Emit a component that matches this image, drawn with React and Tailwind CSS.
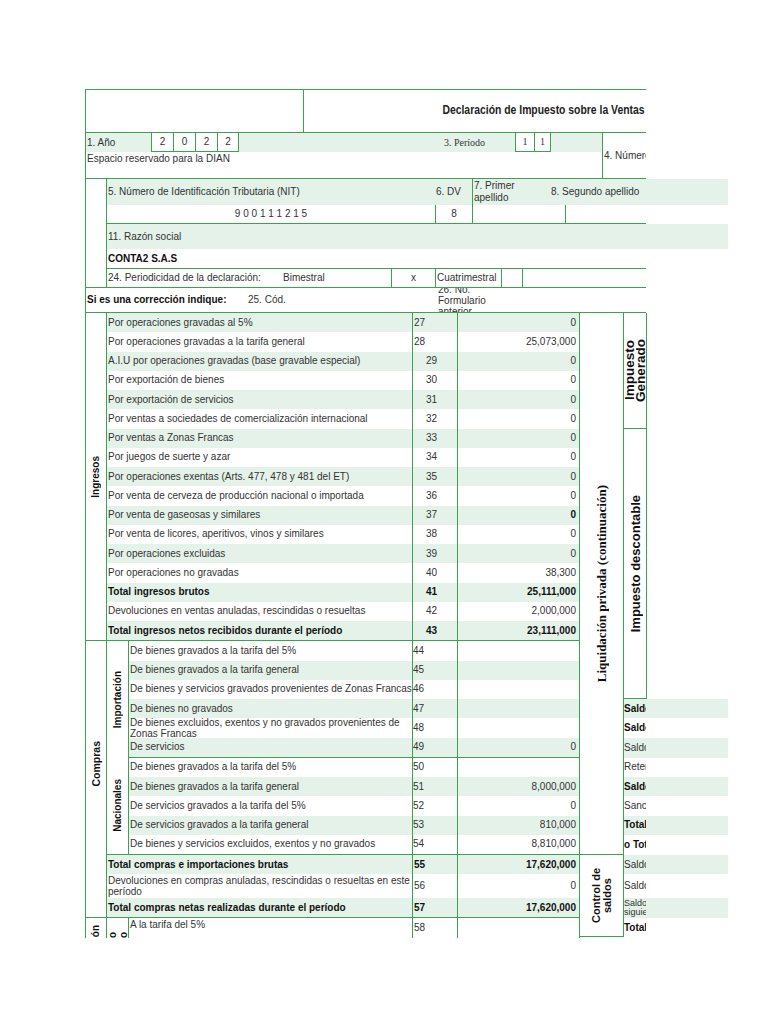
import React from "react";

const L = "border-[#3ca24f]";
const BG = "bg-[#e5f2e9]";
const VT = "[writing-mode:vertical-rl] rotate-180 whitespace-nowrap";

const ingresos = [
  ["Por operaciones gravadas al 5%", "27", "0", { numLeft: true }],
  ["Por operaciones gravadas a la tarifa general", "28", "25,073,000", { numLeft: true }],
  ["A.I.U por operaciones gravadas (base gravable especial)", "29", "0"],
  ["Por exportación de bienes", "30", "0"],
  ["Por exportación de servicios", "31", "0"],
  ["Por ventas a sociedades de comercialización internacional", "32", "0"],
  ["Por ventas a Zonas Francas", "33", "0"],
  ["Por juegos de suerte y azar", "34", "0"],
  ["Por operaciones exentas (Arts. 477, 478 y 481 del ET)", "35", "0"],
  ["Por venta de cerveza de producción nacional o importada", "36", "0"],
  ["Por venta de gaseosas y similares", "37", "0", { valueBold: true }],
  ["Por venta de licores, aperitivos, vinos y similares", "38", "0"],
  ["Por operaciones excluidas", "39", "0"],
  ["Por operaciones no gravadas", "40", "38,300"],
  ["Total ingresos brutos", "41", "25,111,000", { bold: true }],
  ["Devoluciones en ventas anuladas, rescindidas o resueltas", "42", "2,000,000"],
  ["Total ingresos netos recibidos durante el período", "43", "23,111,000", { bold: true }],
];

const importacion = [
  ["De bienes gravados a la tarifa del 5%", "44", ""],
  ["De bienes gravados a la tarifa general", "45", ""],
  ["De bienes y servicios gravados provenientes de Zonas Francas", "46", ""],
  ["De bienes no gravados", "47", ""],
  ["De bienes excluidos, exentos y no gravados provenientes de Zonas Francas", "48", "", { two: true }],
  ["De servicios", "49", "0"],
];

const nacionales = [
  ["De bienes gravados a la tarifa del 5%", "50", ""],
  ["De bienes gravados a la tarifa general", "51", "8,000,000"],
  ["De servicios gravados a la tarifa del 5%", "52", "0"],
  ["De servicios gravados a la tarifa general", "53", "810,000"],
  ["De bienes y servicios excluidos, exentos y no gravados", "54", "8,810,000"],
];

const totales = [
  ["Total compras e importaciones brutas", "55", "17,620,000", { bold: true }],
  ["Devoluciones en compras anuladas, rescindidas o resueltas en este", "56", "0", { two: true, tall: true, second: "período" }],
  ["Total compras netas realizadas durante el período", "57", "17,620,000", { bold: true }],
];

const rightRows = [
  { t: "Saldo a pagar por impuesto", g: true, b: true, h: "h-[19.25px]" },
  { t: "Saldo a favor del período fiscal", g: false, b: true, h: "h-[19.25px]" },
  { t: "Saldo a favor del período fiscal anterior", g: true, b: false, h: "h-[20.25px]" },
  { t: "Retenciones por IVA que le practicaron", g: false, b: false, h: "h-[19.25px]" },
  { t: "Saldo a pagar por impuesto", g: true, b: true, h: "h-[19.25px]" },
  { t: "Sanciones", g: false, b: false, h: "h-[19.25px]" },
  { t: "Total saldo a pagar", g: true, b: true, h: "h-[19.25px]" },
  { t: "o Total saldo a favor", g: false, b: true, h: "h-[20.25px]" },
  { t: "Saldo a favor susceptible de devolución", g: true, b: false, h: "h-[19.25px]" },
  { t: "Saldo a favor sin solicitud de devolución", g: false, b: false, h: "h-[23.75px]" },
  { t: "two", g: true, b: false, h: "h-[20.25px]" },
  { t: "Total retenciones", g: false, b: true, h: "h-[19.25px]" },
];

function DataRow({ r, green, labelW }) {
  const [label, num, value, opt = {}] = r;
  return (
    <div className={`flex ${opt.tall ? "h-[23.75px]" : "h-[19.25px]"} ${green ? BG : ""}`}>
      <div
        className={`${labelW} shrink-0 border-r ${L} pl-[1px] flex items-center overflow-hidden ${
          opt.bold ? "font-bold text-[#111]" : ""
        }`}
      >
        {opt.two ? (
          <span className="leading-[11px]">{label}</span>
        ) : (
          <span className="whitespace-nowrap">{label}</span>
        )}
      </div>
      <div
        className={`w-[45px] shrink-0 border-r ${L} flex items-center ${opt.numLeft ? "pl-[1px]" : ""} ${
          opt.bold ? "font-bold text-[#111]" : ""
        }`}
      >
        {num}
      </div>
      <div
        className={`w-[122px] shrink-0 border-r ${L} flex items-center justify-end pr-[3px] ${
          opt.bold || opt.valueBold ? "font-bold text-[#111]" : ""
        }`}
      >
        {value}
      </div>
    </div>
  );
}

function IngRow({ r, green }) {
  const [label, num, value, opt = {}] = r;
  return (
    <div className={`flex h-[19.25px] ${green ? BG : ""}`}>
      <div
        className={`w-[306px] shrink-0 border-r ${L} pl-[1px] flex items-center overflow-hidden whitespace-nowrap ${
          opt.bold ? "font-bold text-[#111]" : ""
        }`}
      >
        {label}
      </div>
      <div
        className={`w-[45px] shrink-0 border-r ${L} flex items-center ${opt.numLeft ? "pl-[1px]" : "pl-[13px]"} ${
          opt.bold ? "font-bold text-[#111]" : ""
        }`}
      >
        {num}
      </div>
      <div
        className={`w-[122px] shrink-0 border-r ${L} flex items-center justify-end pr-[3px] ${
          opt.bold || opt.valueBold ? "font-bold text-[#111]" : ""
        }`}
      >
        {value}
      </div>
    </div>
  );
}

function TotRow({ r, green }) {
  const [label, num, value, opt = {}] = r;
  return (
    <div className={`flex ${opt.tall ? "h-[23.75px]" : "h-[19.25px]"} ${green ? BG : ""}`}>
      <div
        className={`w-[306px] shrink-0 border-r ${L} pl-[1px] flex items-center ${
          opt.bold ? "font-bold text-[#111]" : ""
        }`}
      >
        {opt.two ? (
          <span className="leading-[11px] whitespace-nowrap">
            {label}
            <br />
            {opt.second}
          </span>
        ) : (
          <span className="whitespace-nowrap">{label}</span>
        )}
      </div>
      <div className={`w-[45px] shrink-0 border-r ${L} flex items-center pl-[1px] ${opt.bold ? "font-bold text-[#111]" : ""}`}>
        {num}
      </div>
      <div
        className={`w-[122px] shrink-0 border-r ${L} flex items-center justify-end pr-[3px] ${
          opt.bold ? "font-bold text-[#111]" : ""
        }`}
      >
        {value}
      </div>
    </div>
  );
}

export default function App() {
  return (
    <div className="min-h-screen w-[768px] bg-white pt-[89px] pl-[85px] font-['Liberation_Sans',Arial,sans-serif] text-[10px] leading-none text-[#333]">
      <div className="w-[643px]">
        {/* Band A: header */}
        <div className="flex">
          <div className={`flex w-[561px] h-[44px] border-t border-b ${L}`}>
            <div className={`w-[219px] border-l border-r ${L}`} />
            <div className="flex-1 flex items-center justify-end pr-[1px] pb-[2px] overflow-hidden">
              <span className="inline-block origin-right scale-x-[0.77] whitespace-nowrap font-bold text-[13.5px] text-[#222]">
                Declaración de Impuesto sobre la Ventas
              </span>
            </div>
          </div>
        </div>

        {/* Band B */}
        <div className="flex">
          <div className={`flex w-[561px] h-[46px] border-b ${L}`}>
            <div className={`flex flex-col w-[518px] border-l border-r ${L}`}>
              <div className={`flex h-[19px] ${BG}`}>
                <div className="w-[65px] pl-[1px] flex items-center">1. Año</div>
                <div className={`w-[22px] bg-white border-l border-b ${L} flex items-center justify-center`}>2</div>
                <div className={`w-[22px] bg-white border-l border-b ${L} flex items-center justify-center`}>0</div>
                <div className={`w-[22px] bg-white border-l border-b ${L} flex items-center justify-center`}>2</div>
                <div className={`w-[22px] bg-white border-l border-r border-b ${L} flex items-center justify-center`}>2</div>
                <div className="w-[276px] pl-[205px] flex items-center font-['Liberation_Serif',serif] whitespace-nowrap">
                  3. Período
                </div>
                <div className={`w-[19px] bg-white border-l border-b ${L} flex items-center justify-center font-['Liberation_Serif',serif]`}>
                  1
                </div>
                <div className={`w-[17px] bg-white border-l border-r border-b ${L} flex items-center justify-center font-['Liberation_Serif',serif]`}>
                  1
                </div>
                <div className="flex-1" />
              </div>
              <div className="pl-[1px] pt-[2px]">Espacio reservado para la DIAN</div>
            </div>
            <div className="flex-1 overflow-hidden flex items-center pl-[1px] whitespace-nowrap">4. Número de formulario</div>
          </div>
        </div>

        {/* Band C */}
        <div className="flex">
          <div className={`w-[22px] border-l border-r border-b ${L}`} />
          <div className="flex flex-col w-[621px]">
            <div className="flex h-[26px]">
              <div className={`flex w-[539px] ${BG}`}>
                <div className="w-[328px] pl-[1px] flex items-center">5. Número de Identificación Tributaria (NIT)</div>
                <div className={`w-[38px] border-r ${L} pl-[1px] flex items-center`}>6. DV</div>
                <div className="w-[76px] pl-[1px] flex items-center leading-[12px]">
                  7. Primer
                  <br />
                  apellido
                </div>
                <div className="flex-1 pl-[2px] flex items-center whitespace-nowrap overflow-hidden">8. Segundo apellido</div>
              </div>
              <div className={`w-[82px] ${BG}`} />
            </div>
            <div className="flex h-[19px]">
              <div className={`flex w-[539px] border-b ${L}`}>
                <div className={`w-[329px] border-r ${L} flex items-center justify-center whitespace-pre`}>9 0 0 1 1 1 2 1 5</div>
                <div className={`w-[37px] border-r ${L} flex items-center justify-center`}>8</div>
                <div className={`w-[93px] border-r ${L}`} />
                <div className="flex-1" />
              </div>
            </div>
            <div className="flex h-[25px]">
              <div className={`w-[539px] ${BG} pl-[1px] flex items-center`}>11. Razón social</div>
              <div className={`w-[82px] ${BG}`} />
            </div>
            <div className="flex h-[20px]">
              <div className={`w-[539px] border-b ${L} pl-[1px] flex items-center font-bold text-[#111]`}>CONTA2 S.A.S</div>
            </div>
            <div className="flex h-[19px]">
              <div className={`flex w-[539px] border-b ${L}`}>
                <div className={`w-[285px] border-r ${L} pl-[1px] flex items-center whitespace-nowrap`}>
                  <span className="w-[175px]">24. Periodicidad de la declaración:</span>
                  <span>Bimestral</span>
                </div>
                <div className={`w-[44px] border-r ${L} flex items-center justify-center`}>x</div>
                <div className={`w-[66px] border-r ${L} pl-[1px] flex items-center`}>Cuatrimestral</div>
                <div className={`w-[21px] border-r ${L}`} />
                <div className="flex-1" />
              </div>
            </div>
          </div>
        </div>

        {/* Band D */}
        <div className="flex">
          <div className={`flex w-[561px] h-[25px] border-l border-b ${L}`}>
            <div className="w-[162px] pl-[1px] flex items-center font-bold text-[#111] whitespace-nowrap">
              Si es una corrección indique:
            </div>
            <div className="w-[189px] flex items-center">25. Cód.</div>
            <div className="w-[60px] h-full overflow-hidden flex items-center leading-[11px] pl-[1px]">
              <span>26. No. Formulario anterior</span>
            </div>
          </div>
        </div>

        {/* Main table */}
        <div className="flex h-[625px] overflow-hidden">
          {/* left part */}
          <div className="flex flex-col w-[495px] shrink-0">
            {/* Ingresos */}
            <div className={`flex border-b ${L}`}>
              <div className={`w-[22px] shrink-0 border-l border-r ${L} flex items-center justify-center`}>
                <span className={`${VT} font-bold text-[#111]`}>Ingresos</span>
              </div>
              <div className="flex flex-col">
                {ingresos.map((r, i) => (
                  <IngRow key={r[1]} r={r} green={i % 2 === 0} />
                ))}
              </div>
            </div>
            {/* Compras */}
            <div className="flex">
              <div className={`w-[22px] shrink-0 border-l border-r border-b ${L} flex items-center justify-center pb-[30px]`}>
                <span className={`${VT} font-bold text-[#111] text-[10.5px]`}>Compras</span>
              </div>
              <div className="flex flex-col w-[473px]">
                <div className="flex">
                  <div className={`w-[22px] shrink-0 border-r ${L} flex items-center justify-center`}>
                    <span className={`${VT} font-bold text-[#111]`}>Importación</span>
                  </div>
                  <div className={`flex flex-col border-b ${L}`}>
                    {importacion.map((r, i) => (
                      <DataRow key={r[1]} r={r} green={i % 2 === 1} labelW="w-[284px]" />
                    ))}
                  </div>
                </div>
                <div className="flex">
                  <div className={`w-[22px] shrink-0 border-r border-b ${L} flex items-center justify-center`}>
                    <span className={`${VT} font-bold text-[#111]`}>Nacionales</span>
                  </div>
                  <div className={`flex flex-col border-b ${L}`}>
                    {nacionales.map((r, i) => (
                      <DataRow key={r[1]} r={r} green={i % 2 === 1} labelW="w-[284px]" />
                    ))}
                  </div>
                </div>
                <div className={`flex flex-col border-b ${L}`}>
                  {totales.map((r, i) => (
                    <TotRow key={r[1]} r={r} green={i % 2 === 0} />
                  ))}
                </div>
              </div>
            </div>
            {/* Row 58 */}
            <div className="flex h-[19.25px]">
              <div className={`w-[22px] shrink-0 border-l border-r ${L} overflow-hidden flex justify-center items-start pt-[7px]`}>
                <span className={`${VT} font-bold text-[#111]`}>Liquidación</span>
              </div>
              <div className={`w-[22px] shrink-0 border-r ${L} overflow-hidden flex justify-center items-start pt-[14px]`}>
                <span className={`${VT} text-end font-bold text-[#111] leading-[11px]`}>
                  Descontado
                  <br />
                  Impuesto
                </span>
              </div>
              <div className={`w-[284px] shrink-0 border-r ${L} pl-[1px] flex items-start pt-[2px] whitespace-nowrap`}>
                A la tarifa del 5%
              </div>
              <div className={`w-[45px] shrink-0 border-r ${L} pl-[1px] flex items-center`}>58</div>
              <div className={`w-[122px] shrink-0 border-r ${L}`} />
            </div>
          </div>

          {/* Liquidación column */}
          <div className="flex flex-col w-[44px] shrink-0">
            <div className={`h-[542px] border-r border-b ${L} flex items-center justify-center`}>
              <span className={`${VT} font-['Liberation_Serif',serif] font-bold text-[13px] text-[#111]`}>
                Liquidación privada (continuación)
              </span>
            </div>
            <div className={`h-[82px] border-r border-b ${L} flex items-center justify-center`}>
              <span className={`${VT} font-bold text-[11px] leading-[11px] text-[#111] text-center`}>
                Control de
                <br />
                saldos
              </span>
            </div>
          </div>

          {/* Right column */}
          <div className="flex flex-col w-[104px] shrink-0">
            <div className={`w-[23px] h-[116px] border-r border-b ${L} flex items-center justify-center overflow-hidden`}>
              <span className={`${VT} font-bold text-[13.5px] leading-[11px] text-[#111] text-center`}>
                Impuesto
                <br />
                Generado
              </span>
            </div>
            <div className={`w-[23px] h-[270px] border-r border-b ${L} flex items-center justify-center overflow-hidden`}>
              <span className={`${VT} font-bold text-[13px] text-[#111]`}>Impuesto descontable</span>
            </div>
            {rightRows.map((r, i) => (
              <div key={i} className={`flex ${r.h} ${r.g ? BG : ""}`}>
                <div
                  className={`w-[22px] overflow-hidden whitespace-nowrap flex items-center ${
                    r.b ? "font-bold text-[#111]" : ""
                  }`}
                >
                  {r.t === "two" ? (
                    <span className="text-[9px] leading-[9px]">
                      Saldo a favor del período
                      <br />
                      siguiente
                    </span>
                  ) : (
                    <span>{r.t}</span>
                  )}
                </div>
              </div>
            ))}
          </div>
        </div>
      </div>
    </div>
  );
}
